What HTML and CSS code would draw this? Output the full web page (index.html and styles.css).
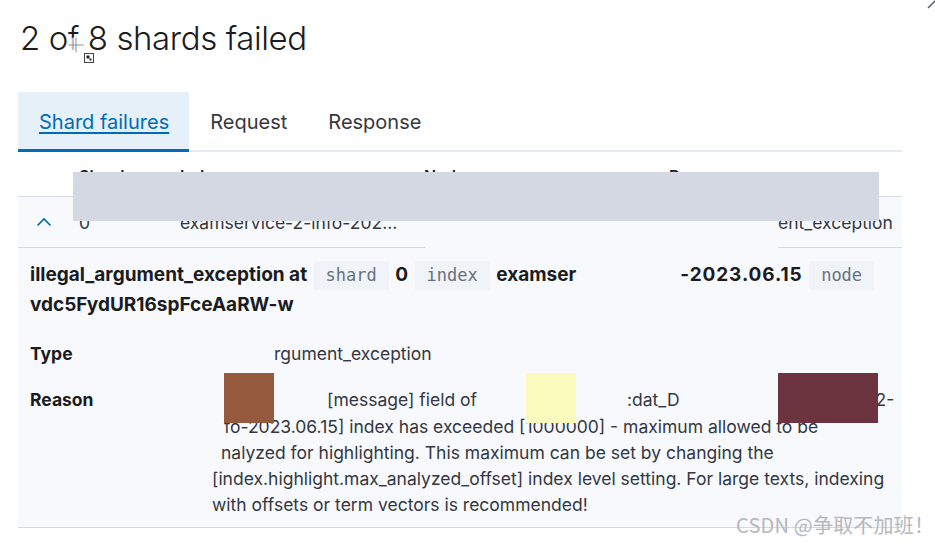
FILE: index.html
```html
<!DOCTYPE html>
<html>
<head>
<meta charset="utf-8">
<link rel="stylesheet" href="styles.css">
</head>
<body>
<div class="page">
  <h1 class="title">2 of 8 shards failed</h1>

  <div class="tabs">
    <div class="tab active"><span class="tab-label">Shard failures</span></div>
    <div class="tab"><span class="tab-label">Request</span></div>
    <div class="tab"><span class="tab-label">Response</span></div>
  </div>

  <div class="table">
    <div class="thead">
      <div class="cell"></div>
      <div class="cell th">Shard</div>
      <div class="cell th">Index</div>
      <div class="cell th">Node</div>
      <div class="cell th">Reason</div>
    </div>
    <div class="trow">
      <div class="cell chev">
        <svg width="16" height="10" viewBox="0 0 16 10"><path d="M1.5 8.5 L8 2 L14.5 8.5" fill="none" stroke="#006bb8" stroke-width="1.6"/></svg>
      </div>
      <div class="cell">0</div>
      <div class="cell">examservice-2-info-202...</div>
      <div class="cell"></div>
      <div class="cell"><span class="sp sp-reason"></span>ent_exception</div>
    </div>
    <div class="detail">
      <div class="dtitle">
        <div class="dline">illegal_argument_exception at <code class="badge">shard</code> 0 <code class="badge">index</code> examser<span class="sp sp-idx"></span><span class="date">-2023.06.15</span> <code class="badge">node</code></div>
        <div class="dline">vdc5FydUR16spFceAaRW-w</div>
      </div>
      <dl class="dl">
        <div class="dl-row">
          <dt>Type</dt>
          <dd><span class="sp sp-type"></span>rgument_exception</dd>
        </div>
        <div class="dl-row">
          <dt>Reason</dt>
          <dd>
            <div class="rline"><span class="sp sp-r1a"></span>[message] field of<span class="sp sp-r1b"></span>:dat_D<span class="sp sp-r1c"></span>2-</div>
            <div class="rline ind2">fo-2023.06.15] index has exceeded [1000000] - maximum allowed to be</div>
            <div class="rline ind3">nalyzed for highlighting. This maximum can be set by changing the</div>
            <div class="rline">[index.highlight.max_analyzed_offset] index level setting. For large texts, indexing</div>
            <div class="rline">with offsets or term vectors is recommended!</div>
          </dd>
        </div>
      </dl>
    </div>
  </div>

  <!-- redaction overlays -->
  <div class="redact grey"></div>
  <div class="redact erase-row"></div>
  <div class="redact brown"></div>
  <div class="redact yellow"></div>
  <div class="redact maroon"></div>

  <svg class="cursor" width="30" height="30" viewBox="0 0 30 30">
    <circle cx="9" cy="8" r="8" fill="#ffffff" opacity="0.7"/>
    <path d="M9 0.5 V15.5 M1.5 8 H16.5" stroke="#8a8f98" stroke-width="1"/>
    <rect x="17.5" y="16.5" width="9" height="9" fill="#ffffff" stroke="#444" stroke-width="1"/>
    <rect x="19.5" y="18.5" width="3" height="3" fill="#222"/>
    <rect x="22.5" y="21.5" width="2" height="2" fill="#222"/>
  </svg>
  <svg class="close" width="10" height="10" viewBox="0 0 10 10"><path d="M1 9 L9 1" stroke="#555a63" stroke-width="1.4"/></svg>

  <div class="watermark">CSDN @争取不加班！</div>
</div>
</body>
</html>
```

FILE: styles.css
```css
* { box-sizing: border-box; }
html, body { margin: 0; padding: 0; background: #ffffff; }
body {
  font-family: Inter, "Noto Sans", sans-serif;
  color: #343741;
  width: 935px;
  height: 545px;
  overflow: hidden;
}
.page {
  position: relative;
  width: 935px;
  height: 545px;
  padding: 0 33px 0 18px;
}
.title {
  margin: 0;
  padding: 17px 0 0 2px;
  height: 92px;
  font-size: 33px;
  line-height: 42px;
  font-weight: 300;
  color: #1a1c21;
  letter-spacing: -0.4px;
}
.tabs {
  display: flex;
  height: 60px;
  border-bottom: 2px solid #e6ebf2;
}
.tab {
  padding: 0 20px 0 21px;
  display: flex;
  align-items: center;
  font-size: 20px;
  color: #343741;
  height: 60px;
}
.tab.active {
  background: #e6f0f8;
  border-bottom: 3px solid #006bb8;
  color: #006bb8;
  padding-top: 3px;
}
.tab.active .tab-label { text-decoration: underline; text-underline-offset: 3px; }

.table { width: 884px; }
.thead, .trow {
  display: grid;
  grid-template-columns: 55px 101px 244px 245px 239px;
  align-items: center;
}
.thead { height: 45px; border-bottom: 1px solid #d3dae6; padding-top: 3px; }
.th { font-weight: 600; font-size: 16px; color: #1a1c21; }
.cell { padding-left: 6px; white-space: nowrap; overflow: hidden; }
.trow {
  height: 51px;
  background: #f7f9fc;
  border-bottom: 1px solid #d3dae6;
  font-size: 17.5px;
}
.chev { padding-left: 18px; display: flex; align-items: center; }
.sp { display: inline-block; height: 1px; }
.sp-reason { width: 109px; }

.detail {
  background: #f7f9fc;
  height: 280px;
  border-bottom: 1px solid #d3dae6;
  padding: 12px 12px 0 12px;
}
.dtitle { font-size: 19px; font-weight: 700; color: #1a1c21; }
.dline { height: 30px; line-height: 30px; white-space: nowrap; }
.badge {
  font-family: "DejaVu Sans Mono", "Liberation Mono", monospace;
  font-weight: 400;
  font-size: 17px;
  color: #69707d;
  background: #f0f3f8;
  padding: 4px 12px 5px 12px;
  margin: 0 2px;
}
.sp-idx { width: 104px; }
.date { letter-spacing: 0.9px; }
.dl { margin: 21px 0 0 0; }
.dl-row { display: flex; }
.dl-row + .dl-row { margin-top: 20px; }
dt {
  flex: 0 0 182px;
  width: 182px;
  font-weight: 700;
  font-size: 17.5px;
  color: #1a1c21;
  line-height: 26px;
}
dd { margin: 0; font-size: 17.5px; line-height: 26.3px; color: #343741; white-space: nowrap; }
.sp-type { width: 62px; }
.sp-r1a { width: 115px; }
.sp-r1b { width: 150px; }
.sp-r1c { width: 196px; }
.ind2 { padding-left: 12px; }
.ind3 { padding-left: 9px; }

.redact { position: absolute; }
.grey { left: 73px; top: 172px; width: 806px; height: 49px; background: #d3d8e2; }
.erase-row { left: 425px; top: 236px; width: 353px; height: 16px; background: #f7f9fc; }
.brown { left: 224px; top: 373px; width: 50px; height: 50px; background: #955a3e; }
.yellow { left: 526px; top: 373px; width: 50px; height: 50px; background: #fafabc; }
.maroon { left: 778px; top: 373px; width: 100px; height: 50px; background: #6b343e; }

.cursor { position: absolute; left: 67px; top: 37px; }
.close { position: absolute; left: 927px; top: -1px; }
.watermark {
  position: absolute;
  left: 736px;
  top: 511px;
  white-space: nowrap;
  font-family: "Noto Sans CJK SC", "Noto Sans", sans-serif;
  font-size: 20px;
  line-height: 28px;
  color: #b5b8bd;
  letter-spacing: 0.2px;
}
```
